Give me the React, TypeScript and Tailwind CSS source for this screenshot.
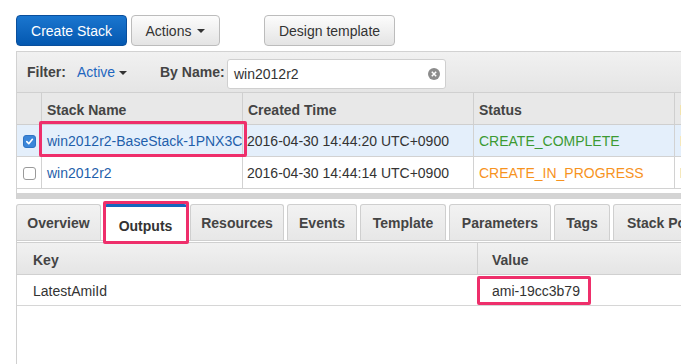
import React from "react";

const pink = "pointer-events-none absolute border-[3px] border-[#ee2f6b] rounded-[2px]";

const Caret = () => (
  <span className="inline-block w-0 h-0 border-x-[4px] border-x-transparent border-t-[4px] border-t-[#333]" />
);

const CheckBox = ({ checked }: { checked: boolean }) =>
  checked ? (
    <span className="flex w-[13px] h-[13px] items-center justify-center rounded-[3px] bg-[#3b86d9] border border-[#2f74c4]">
      <svg width="9" height="9" viewBox="0 0 10 10">
        <path d="M2 5.2 L4.2 7.4 L8.2 2.6" fill="none" stroke="#fff" strokeWidth="1.8" strokeLinecap="round" strokeLinejoin="round" />
      </svg>
    </span>
  ) : (
    <span className="block w-[13px] h-[13px] rounded-[3px] bg-white border border-[#9a9a9a]" />
  );

const stacks = [
  { name: "win2012r2-BaseStack-1PNX3C", time: "2016-04-30 14:44:20 UTC+0900", status: "CREATE_COMPLETE", selected: true },
  { name: "win2012r2", time: "2016-04-30 14:44:14 UTC+0900", status: "CREATE_IN_PROGRESS", selected: false },
];

const tabs = [
  { label: "Overview", w: "w-[85px]" },
  { label: "Outputs", w: "w-[83px]" },
  { label: "Resources", w: "w-[94px]" },
  { label: "Events", w: "w-[70px]" },
  { label: "Template", w: "w-[86px]" },
  { label: "Parameters", w: "w-[102px]" },
  { label: "Tags", w: "w-[56px]" },
  { label: "Stack Policy", w: "w-[110px]" },
];

export default function App() {
  return (
    <div className="w-[681px] h-[364px] overflow-hidden bg-white text-[14px] text-[#333] font-['Liberation_Sans',Arial,sans-serif]">
      <div className="w-[780px] pl-4 pt-[15px] flex flex-col">
        {/* toolbar */}
        <div className="flex h-[31px]">
          <button className="w-[111px] pt-[1px] rounded-[4px] border border-[#0a4f9c] bg-linear-to-b from-[#1a76cf] to-[#0458b0] text-white">
            Create Stack
          </button>
          <button className="ml-[4px] w-[89px] pt-[1px] flex items-center justify-center gap-[6px] rounded-[4px] border border-[#bcbcbc] bg-linear-to-b from-[#fcfcfc] to-[#e4e4e4]">
            Actions <Caret />
          </button>
          <button className="ml-[44px] w-[131px] pt-[1px] rounded-[4px] border border-[#bcbcbc] bg-linear-to-b from-[#fcfcfc] to-[#e4e4e4]">
            Design template
          </button>
        </div>

        {/* stack list panel */}
        <div className="mt-[5px] border-l border-t border-[#d2d2d2]">
          <div className="h-[41px] flex items-center pl-[10px] pt-[1px] bg-linear-to-b from-[#f1f1f1] to-[#e5e5e5] border-b border-[#d0d0d0]">
            <span className="w-[50px] font-bold text-[#444]">Filter:</span>
            <span className="w-[83px] flex items-center gap-[4px] text-[#1e66bf]">
              Active <Caret />
            </span>
            <span className="w-[67px] font-bold text-[#444]">By Name:</span>
            <div className="mt-[3px] w-[219px] h-[30px] flex items-center justify-between pl-[6px] pr-[5px] bg-white border border-[#cfcfcf] rounded-[3px]">
              <span className="text-[#333]">win2012r2</span>
              <svg width="12" height="12" viewBox="0 0 12 12">
                <circle cx="6" cy="6" r="6" fill="#8c8c8c" />
                <path d="M3.8 3.8 L8.2 8.2 M8.2 3.8 L3.8 8.2" stroke="#fff" strokeWidth="1.5" />
              </svg>
            </div>
          </div>

          {/* header */}
          <div className="flex h-[32px] bg-[#e8e8e8] border-b border-[#cfcfcf] font-bold text-[#444]">
            <div className="w-[25px] border-r border-[#cfcfcf]" />
            <div className="w-[201px] border-r border-[#cfcfcf] pl-[5px] pt-[3px] flex items-center">Stack Name</div>
            <div className="w-[231px] border-r border-[#cfcfcf] pl-[5px] pt-[3px] flex items-center">Created Time</div>
            <div className="w-[201px] border-r border-[#cfcfcf] pl-[5px] pt-[3px] flex items-center">Status</div>
            <div className="flex-1 pl-[5px] pt-[3px] flex items-center">
              <span className="block w-[4px] h-[10px] bg-[#f2e3ad]" />
            </div>
          </div>

          {stacks.map((s) => (
            <div
              key={s.name}
              className={`flex h-[32px] border-b border-[#d2d2d2] ${s.selected ? "bg-[#e4effb]" : "bg-white"}`}
            >
              <div className="w-[25px] border-r border-[#d2d2d2] flex items-center pl-[6px] pt-[2px]">
                <CheckBox checked={s.selected} />
              </div>
              <div className="relative w-[201px] border-r border-[#d2d2d2]">
                <div className="h-full pl-[5px] pt-[2px] flex items-center overflow-hidden whitespace-nowrap text-[#1f5fab]">
                  {s.name}
                </div>
                {s.selected && <div className={`${pink} left-[-3px] top-[-4px] w-[208px] h-[36px]`} />}
              </div>
              <div className="w-[231px] border-r border-[#d2d2d2] pl-[4px] pt-[2px] flex items-center whitespace-nowrap">
                {s.time}
              </div>
              <div
                className={`w-[201px] border-r border-[#d2d2d2] pl-[5px] pt-[2px] flex items-center ${
                  s.status === "CREATE_COMPLETE" ? "text-[#3c9a33]" : "text-[#f7931e]"
                }`}
              >
                {s.status}
              </div>
              <div className="flex-1 pl-[5px] flex items-center">
                <span className="block w-[4px] h-[10px] bg-[#f5e8bb]" />
              </div>
            </div>
          ))}

          <div className="h-[4px] bg-white" />
          <div className="h-[6px] bg-[#d4d4d4]" />
        </div>

        {/* tabs */}
        <div className="mt-[5px] flex items-end gap-[3px] h-[36px]">
          {tabs.map((t) =>
            t.label === "Outputs" ? (
              <div key={t.label} className={`relative ${t.w} h-[38px] -mb-[2px] z-10`}>
                <div className="h-full flex items-center justify-center pt-[3px] bg-white border-x border-[#cfcfcf] border-t-[3px] border-t-[#1467be] rounded-t-[3px] font-bold text-[#333]">
                  {t.label}
                </div>
                <div className={`${pink} left-[-1px] top-[-3px] w-[86px] h-[43px]`} />
              </div>
            ) : (
              <div
                key={t.label}
                className={`${t.w} h-[36px] pt-[1px] flex items-center whitespace-nowrap bg-linear-to-b from-[#f2f2f2] to-[#e7e7e7] border-x border-t border-[#cfcfcf] rounded-t-[3px] font-bold text-[#444] ${
                  t.label === "Stack Policy" ? "justify-start pl-[13px]" : "justify-center"
                }`}
              >
                {t.label}
              </div>
            )
          )}
        </div>

        {/* outputs panel */}
        <div className="h-[200px] border-l border-t border-[#d0d0d0] pt-px">
          <div className="flex h-[33px] border-t border-b border-[#d0d0d0] bg-linear-to-b from-[#f1f1f1] to-[#e5e5e5] font-bold text-[#444]">
            <div className="w-[461px] border-r border-[#d0d0d0] pl-[16px] pt-[4px] flex items-center">Key</div>
            <div className="flex-1 pl-[14px] pt-[4px] flex items-center">Value</div>
          </div>
          <div className="flex h-[31px] border-b border-[#d6d6d6]">
            <div className="w-[461px] pl-[16px] pt-[3px] flex items-center">LatestAmiId</div>
            <div className="relative flex-1 pl-[14px] pt-[3px] flex items-center">
              ami-19cc3b79
              <div className={`${pink} left-[-1px] top-[1px] w-[114px] h-[29px]`} />
            </div>
          </div>
        </div>
      </div>
    </div>
  );
}
